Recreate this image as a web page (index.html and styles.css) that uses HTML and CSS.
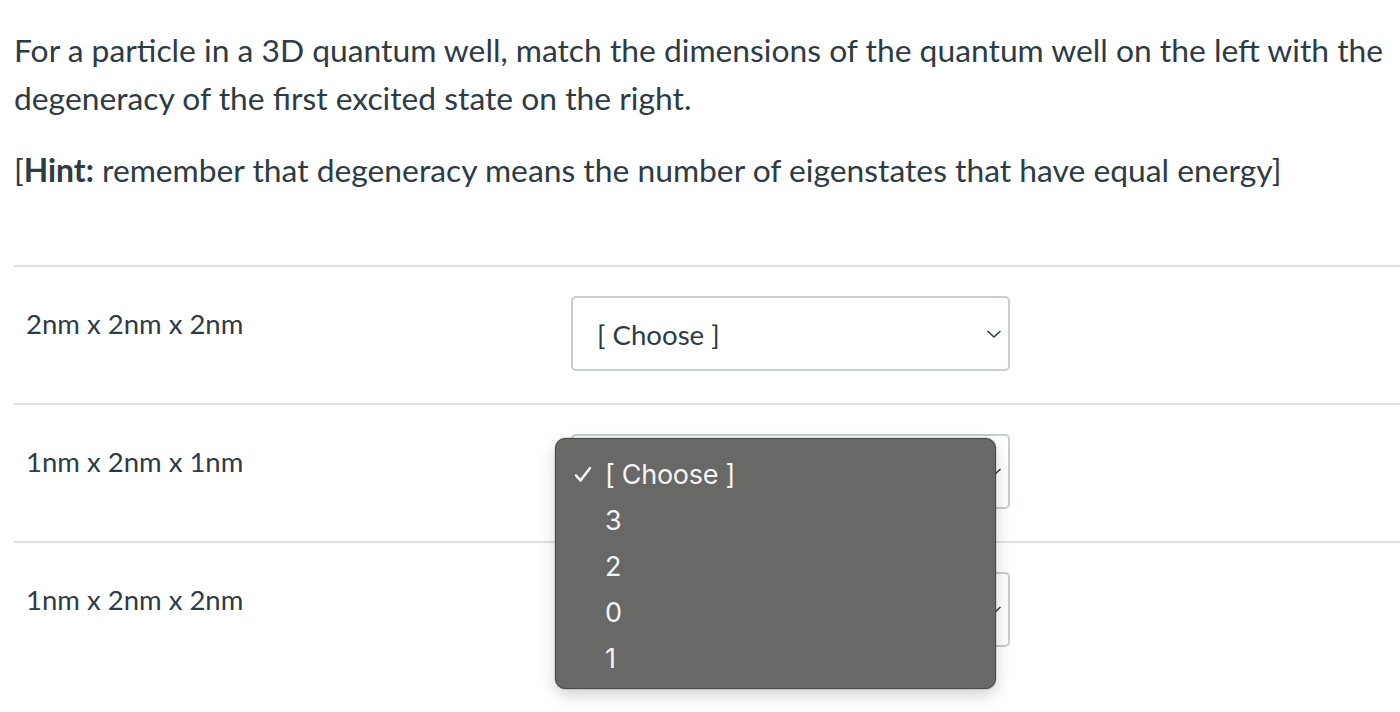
FILE: index.html
```html
<!DOCTYPE html>
<html>
<head>
<meta charset="utf-8">
<link rel="stylesheet" href="styles.css">
</head>
<body>
<div class="page">
  <div class="question">
    <p class="text">For a particle in a 3D quantum well, match the dimensions of the quantum well on the left with the degeneracy of the first excited state on the right.</p>
    <p class="text hint">[<strong>Hint:</strong> remember that degeneracy means the number of eigenstates that have equal energy]</p>
  </div>
  <div class="answers">
    <div class="row">
      <div class="label">2nm x 2nm x 2nm</div>
      <div class="select">
        <span class="value">[ Choose ]</span>
        <svg class="chev" width="16" height="10" viewBox="0 0 16 10"><path d="M1.5 2 L8 8 L14.5 2" fill="none" stroke="#2d3b45" stroke-width="1.6"/></svg>
      </div>
    </div>
    <div class="row">
      <div class="label">1nm x 2nm x 1nm</div>
      <div class="select-wrap">
        <div class="select">
          <span class="value">[ Choose ]</span>
          <svg class="chev" width="16" height="10" viewBox="0 0 16 10"><path d="M1.5 2 L8 8 L14.5 2" fill="none" stroke="#2d3b45" stroke-width="1.6"/></svg>
        </div>
        <ul class="menu">
          <li class="item selected"><span class="check"><svg width="18" height="17" viewBox="0 0 18 17"><path d="M2 9.5 L6.5 14.5 L16 2" fill="none" stroke="#f4f4f4" stroke-width="2.6" stroke-linecap="round" stroke-linejoin="round"/></svg></span>[ Choose ]</li>
          <li class="item"><span class="check"></span>3</li>
          <li class="item"><span class="check"></span>2</li>
          <li class="item"><span class="check"></span>0</li>
          <li class="item"><span class="check"></span>1</li>
        </ul>
      </div>
    </div>
    <div class="row">
      <div class="label">1nm x 2nm x 2nm</div>
      <div class="select">
        <span class="value">[ Choose ]</span>
        <svg class="chev" width="16" height="10" viewBox="0 0 16 10"><path d="M1.5 2 L8 8 L14.5 2" fill="none" stroke="#2d3b45" stroke-width="1.6"/></svg>
      </div>
    </div>
  </div>
</div>
</body>
</html>
```

FILE: styles.css
```css
html {
  overflow: hidden;
}
html, body {
  margin: 0;
  padding: 0;
  background: #ffffff;
}
body {
  min-height: 712px;
}
.page {
  padding: 26px 0 0 14px;
  font-family: Lato, "Open Sans", sans-serif;
  color: #2d3b45;
}
.text {
  margin: 0 -12px 24px 0;
  font-size: 31.8px;
  line-height: 48px;
}
.hint {
  margin-bottom: 0;
}
.answers {
  margin-top: 71px;
}
.row {
  border-top: 2px solid #dfe1e2;
  height: 136px;
  display: flex;
  align-items: flex-start;
}
.label {
  width: 557px;
  padding-left: 12px;
  padding-top: 42px;
  font-size: 27.5px;
  line-height: 30px;
  color: #2d3b45;
  box-sizing: border-box;
}
.select-wrap {
  position: relative;
}
.select {
  margin-top: 29px;
  width: 439px;
  height: 75px;
  box-sizing: border-box;
  border: 2px solid #c7cdd1;
  border-radius: 5px;
  display: flex;
  align-items: center;
  justify-content: space-between;
  padding: 0 6px 0 24px;
}
.value {
  font-size: 27.6px;
  color: #2d3b45;
  padding-top: 2px;
}
.chev {
  display: block;
}
.menu {
  position: absolute;
  left: -16px;
  top: 33px;
  width: 441px;
  height: 251px;
  box-sizing: border-box;
  margin: 0;
  padding: 12px 0 0 0;
  list-style: none;
  background: #686866;
  border: 1.5px solid #4a4a48;
  border-radius: 10px;
  box-shadow: 0 6px 16px rgba(0,0,0,0.18), 0 0 0 0.5px rgba(0,0,0,0.2);
  font-family: Inter, "Liberation Sans", sans-serif;
}
.item {
  display: flex;
  align-items: center;
  height: 46px;
  font-size: 27px;
  color: #f4f4f4;
  padding-left: 18px;
  letter-spacing: -0.3px;
}
.check {
  width: 31px;
  display: inline-flex;
  align-items: center;
}
.check svg {
  display: block;
}
```
